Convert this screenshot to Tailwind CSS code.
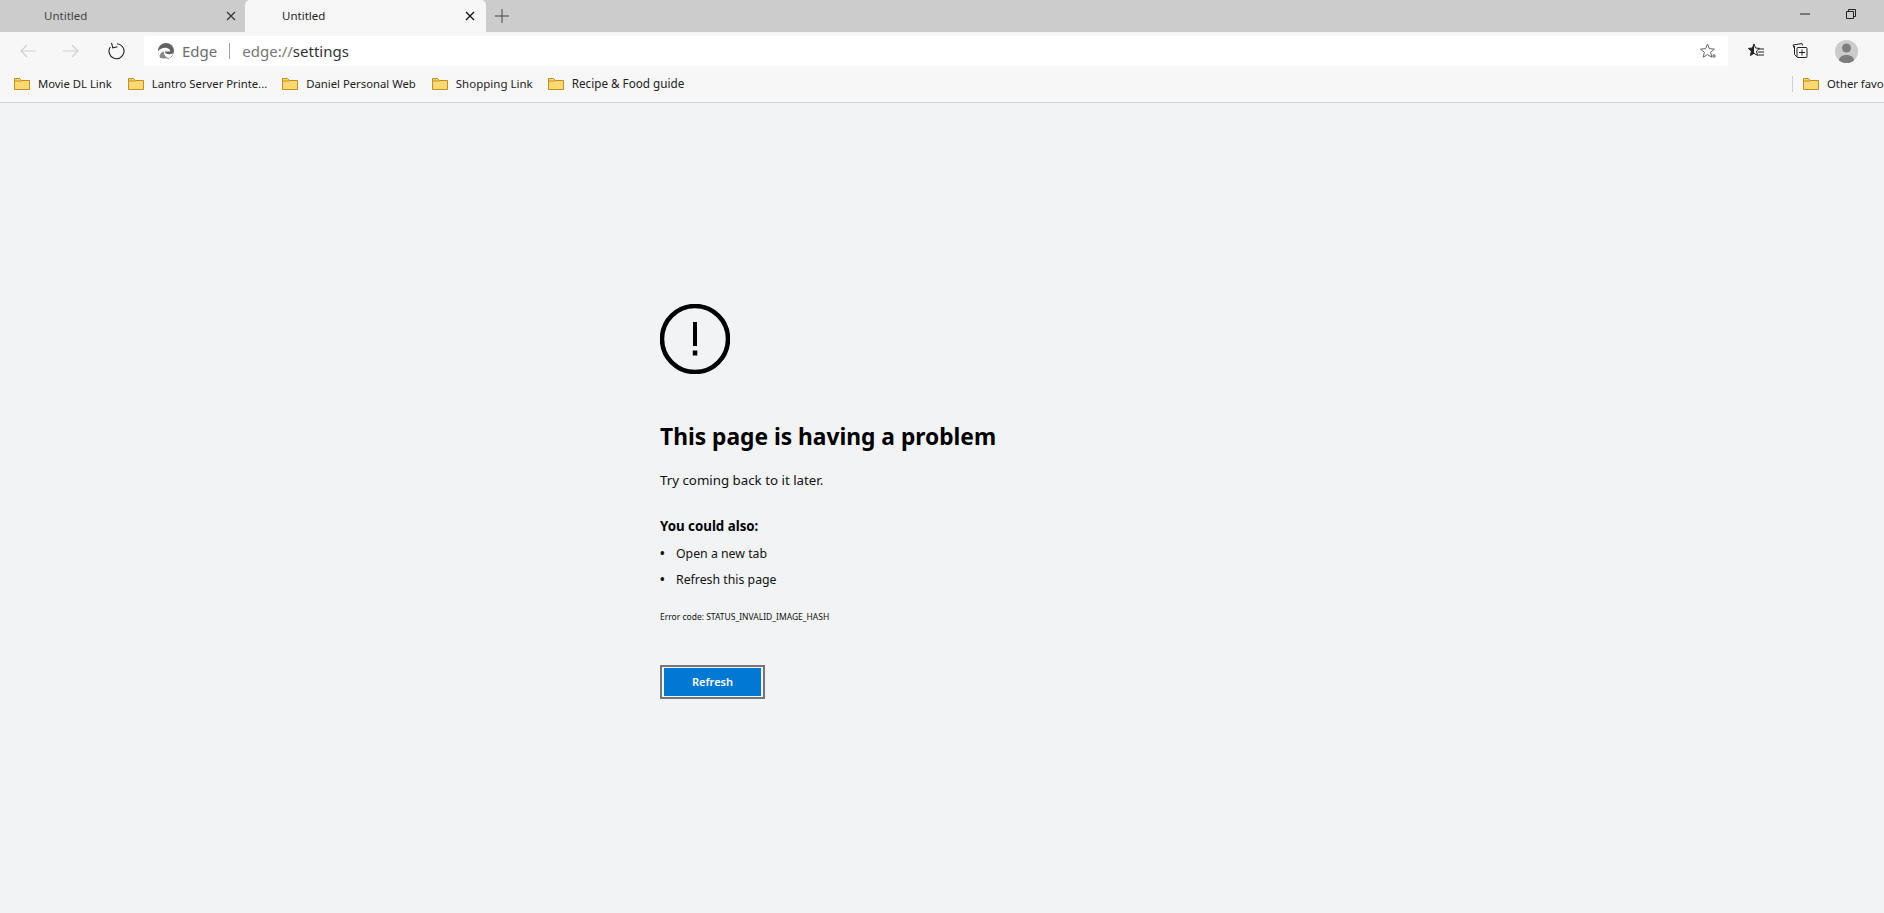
<!DOCTYPE html>
<html lang="en">
<head>
<meta charset="utf-8">
<title>Untitled</title>
<script src="https://cdn.jsdelivr.net/npm/@tailwindcss/browser@4"></script>
</head>
<body class="m-0 h-[913px] w-[1884px] overflow-hidden bg-[#f2f3f5] font-['Noto_Sans',sans-serif] text-black">
<!-- Tab strip -->
<div class="flex h-[32px] items-stretch bg-[#cccccc]">
  <div class="flex w-[245px] items-center text-[11.5px] text-[#444]">
    <span class="ml-[44px] flex-1">Untitled</span>
    <svg class="mr-[9px] h-[10px] w-[10px]" viewBox="0 0 10 10"><path d="M1 1l8 8M9 1l-8 8" stroke="#333" stroke-width="1.2" fill="none"/></svg>
  </div>
  <div class="flex w-[241px] items-center rounded-t-[5px] bg-[#f7f7f7] text-[11.5px] text-[#222]">
    <span class="ml-[37px] flex-1">Untitled</span>
    <svg class="mr-[11px] h-[10px] w-[10px]" viewBox="0 0 10 10"><path d="M1 1l8 8M9 1l-8 8" stroke="#111" stroke-width="1.3" fill="none"/></svg>
  </div>
  <div class="flex w-[32px] items-center justify-center">
    <svg class="h-[14px] w-[14px]" viewBox="0 0 14 14"><path d="M7 0v14M0 7h14" stroke="#444" stroke-width="1" fill="none"/></svg>
  </div>
  <div class="flex-1"></div>
  <div class="flex w-[24px] items-center justify-center pb-[4px]">
    <svg class="h-[10px] w-[10px]" viewBox="0 0 10 10"><path d="M0 5h10" stroke="#222" stroke-width="1" fill="none"/></svg>
  </div>
  <div class="ml-[22px] mr-[21px] flex w-[24px] items-center justify-center pb-[4px]">
    <svg class="h-[10px] w-[10px]" viewBox="0 0 10 10"><path d="M.5 2.500h7v7h-7zM2.500 2.500v-2h7v7h-2" stroke="#222" stroke-width="1" fill="none"/></svg>
  </div>
</div>
<!-- Toolbar -->
<div class="flex h-[38px] items-center bg-[#f7f7f7]">
  <div class="flex w-[144px] items-center pl-[20px]">
    <svg class="h-[16px] w-[16px]" viewBox="0 0 16 16"><path d="M16 8H1M7 2L1 8l6 6" stroke="#cfcfcf" stroke-width="1.1" fill="none"/></svg>
    <svg class="ml-[27px] h-[16px] w-[16px]" viewBox="0 0 16 16"><path d="M0 8h15M9 2l6 6-6 6" stroke="#cfcfcf" stroke-width="1.1" fill="none"/></svg>
    <svg class="ml-[28px] h-[18px] w-[18px]" viewBox="0 0 18 18"><path d="M10 1.700A7.500 7.500 0 1 1 3.300 5" stroke="#222" stroke-width="1.1" fill="none"/><path d="M4.500 .8l1.300 5L10.500 4.800" stroke="#222" stroke-width="1.1" fill="none"/></svg>
  </div>
  <div class="flex h-[30px] w-[1584px] items-center rounded-[3px] bg-white text-[15px]">
    <svg class="ml-[14px] h-[16px] w-[16px]" viewBox="0 0 16 16"><circle cx="8" cy="8" r="8" fill="#616161"/><path d="M0 8.500C2 5.500 5 4.500 8 4.700c2.500.2 4.500 1.800 4.300 3.800H6.800c.2 2.600 4 3.800 8.700 1.800C14 13.500 11 16 8 16 4 16 .2 13 0 8.500z" fill="#fff"/><path d="M2 15c-1-3 1-6 4-6.500-.5 3 1.500 6 6 7z" fill="#8a8a8a"/></svg>
    <span class="ml-[8px] text-[#6d6d6d]">Edge</span>
    <span class="ml-[12px] h-[16px] w-px bg-[#a0a0a0]"></span>
    <span class="ml-[12px] text-[#777]">edge://<span class="text-[#333]">settings</span></span>
    <span class="flex-1"></span>
    <svg class="mr-[12px] h-[16px] w-[16px]" viewBox="0 0 16 16"><path d="M7.500 1l1.900 4.700 5 .4-3.800 3.200 1.200 4.900-4.300-2.600-4.300 2.600 1.200-4.900L.6 6.100l5-.4z" stroke="#666" stroke-width="1" fill="none"/><path d="M12 13h4M14 11v4" stroke="#666" stroke-width="1"/></svg>
  </div>
  <div class="ml-[20px] flex items-center">
    <svg class="h-[16px] w-[16px]" viewBox="0 0 16 16"><path d="M6 1l1.500 4 4 .4-3 2.700 1 4.400L6 10.300 2.400 12.500l1-4.400-3-2.700 4-.4z" fill="none" stroke="#222"/><path d="M6 1v9.300L2.400 12.500l1-4.400-3-2.700 4-.4z" fill="#222"/><path d="M10 6h6M10 9h6M10 12h6" stroke="#222" stroke-width="1"/></svg>
    <svg class="ml-[28px] h-[16px] w-[16px]" viewBox="0 0 16 16"><path d="M2.500 5.500L1 2l9-1.500.5 2" stroke="#222" stroke-width="1" fill="none"/><path d="M2.500 3v8.500l3 3" stroke="#222" stroke-width="1" fill="none"/><rect x="5" y="4.500" width="10" height="10" rx="1" stroke="#222" fill="none"/><path d="M10 6.500v6M7 9.500h6" stroke="#222"/></svg>
    <svg class="ml-[27px] h-[23px] w-[23px] rounded-full bg-[#cbcbcb]" viewBox="0 0 23 23"><circle cx="11.500" cy="8" r="4.500" fill="#7d7d7d"/><path d="M3.500 23c0-6 3.500-8 8-8s8 2 8 8z" fill="#7d7d7d"/></svg>
  </div>
</div>
<!-- Favorites bar -->
<div class="flex h-[33px] items-center border-b border-[#d2d2d2] bg-[#f7f7f7] pb-[4px] text-[11.300px] text-[#222]">
  <div class="flex flex-1 items-center pl-[14px]">
    <svg class="h-[14px] w-[16px]" viewBox="0 0 16 14"><path d="M.5 12.500v-11h5l2 2h8v9z" fill="#fbd872" stroke="#c08f1c"/><path d="M.5 4h6l1.500-.5" stroke="#c08f1c" fill="none"/></svg>
    <span class="ml-[8px]">Movie DL Link</span>
    <svg class="ml-[16px] h-[14px] w-[16px]" viewBox="0 0 16 14"><path d="M.5 12.500v-11h5l2 2h8v9z" fill="#fbd872" stroke="#c08f1c"/><path d="M.5 4h6l1.500-.5" stroke="#c08f1c" fill="none"/></svg>
    <span class="ml-[8px]">Lantro Server Printe...</span>
    <svg class="ml-[15px] h-[14px] w-[16px]" viewBox="0 0 16 14"><path d="M.5 12.500v-11h5l2 2h8v9z" fill="#fbd872" stroke="#c08f1c"/><path d="M.5 4h6l1.500-.5" stroke="#c08f1c" fill="none"/></svg>
    <span class="ml-[8px]">Daniel Personal Web</span>
    <svg class="ml-[16px] h-[14px] w-[16px]" viewBox="0 0 16 14"><path d="M.5 12.500v-11h5l2 2h8v9z" fill="#fbd872" stroke="#c08f1c"/><path d="M.5 4h6l1.500-.5" stroke="#c08f1c" fill="none"/></svg>
    <span class="ml-[8px] text-[11.500px]">Shopping Link</span>
    <svg class="ml-[15px] h-[14px] w-[16px]" viewBox="0 0 16 14"><path d="M.5 12.500v-11h5l2 2h8v9z" fill="#fbd872" stroke="#c08f1c"/><path d="M.5 4h6l1.500-.5" stroke="#c08f1c" fill="none"/></svg>
    <span class="ml-[8px] text-[11.700px]">Recipe &amp; Food guide</span>
  </div>
  <div class="flex w-[92px] items-center">
    <span class="h-[16px] w-px bg-[#cfcfcf]"></span>
    <svg class="ml-[10px] h-[14px] w-[16px] shrink-0" viewBox="0 0 16 14"><path d="M.5 12.500v-11h5l2 2h8v9z" fill="#fbd872" stroke="#c08f1c"/><path d="M.5 4h6l1.500-.5" stroke="#c08f1c" fill="none"/></svg>
    <span class="ml-[8px] w-[57px] overflow-hidden whitespace-nowrap">Other favo</span>
  </div>
</div>
<!-- Error page -->
<main class="pl-[660px] pt-[201px]">
  <svg class="h-[70px] w-[70px]" viewBox="0 0 70 70"><circle cx="35" cy="35" r="33" stroke="#000" stroke-width="4.500" fill="none"/><rect x="33" y="18" width="4" height="24" fill="#000"/><rect x="32.800" y="46.500" width="4.500" height="5" fill="#000"/></svg>
  <h1 class="mt-[47px] text-[22.750px] font-bold leading-[32px]">This page is having a problem</h1>
  <p class="mt-[17px] text-[13.300px] leading-[20px] text-[#111]">Try coming back to it later.</p>
  <p class="mt-[26px] text-[13.300px] font-bold leading-[20px]">You could also:</p>
  <ul class="mt-[8px] text-[12.300px] leading-[20px] text-[#111]">
    <li class="flex"><span class="w-[16px] font-bold">•</span>Open a new tab</li>
    <li class="mt-[6px] flex"><span class="w-[16px] font-bold">•</span>Refresh this page</li>
  </ul>
  <p class="mt-[20px] text-[8.500px] leading-[14px] text-[#111]">Error code: STATUS_INVALID_IMAGE_HASH</p>
  <div class="mt-[41px] w-[105px] border-2 border-[#767676] px-[2px] py-[1px]">
    <button class="block h-[28px] w-full bg-[#0078d4] text-[11px] font-semibold text-white">Refresh</button>
  </div>
</main>
</body>
</html>
